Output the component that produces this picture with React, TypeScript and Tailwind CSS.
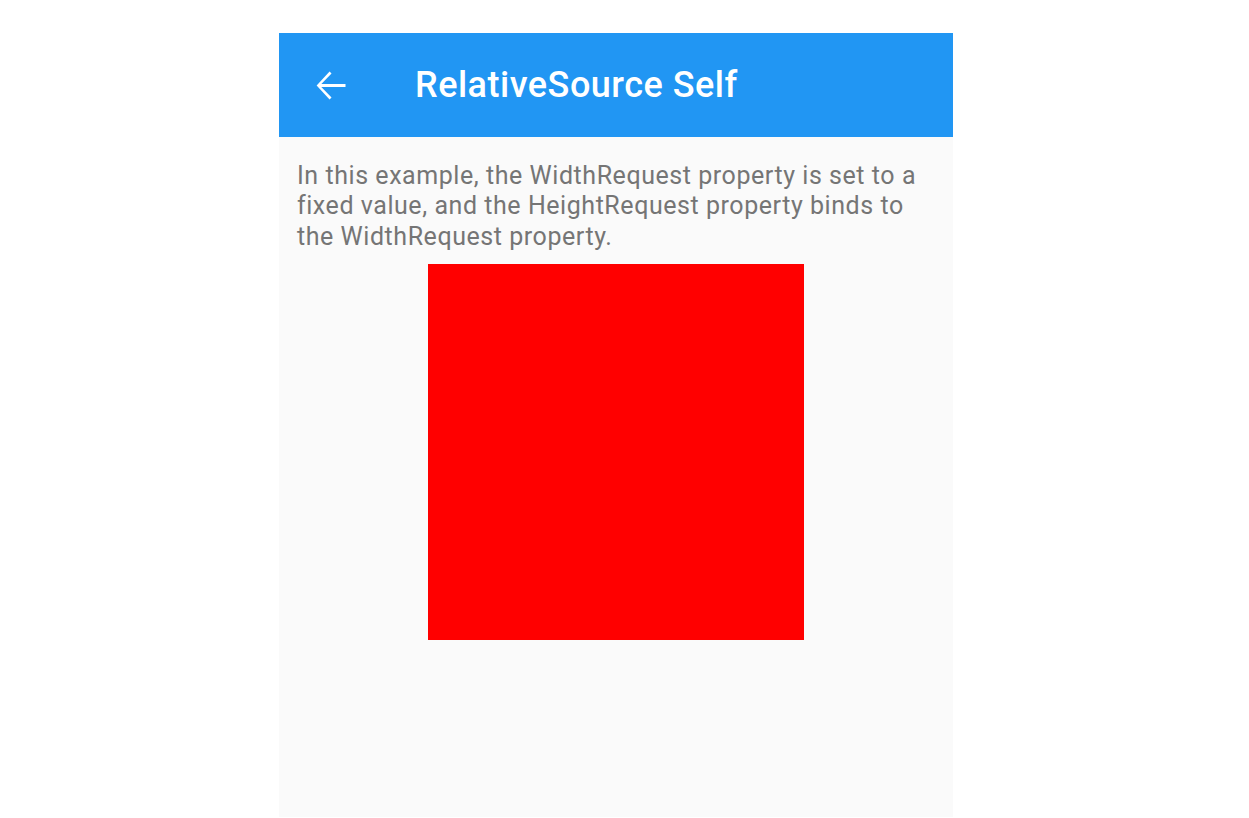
import React from "react";

export default function App() {
  return (
    <div className="w-[1249px] h-[818px] bg-white flex" style={{ fontFamily: "Roboto, 'Noto Sans', sans-serif" }}>
      <div className="w-[674px] ml-[279px] mt-[33px] h-[784px] flex flex-col bg-[#fafafa]">
        <div className="h-[104px] bg-[#2196f3] flex items-center shrink-0">
          <div className="ml-[29px] w-[45px] h-[45px] flex items-center justify-center">
            <svg viewBox="0 0 24 24" width="45" height="45" fill="white">
              <path d="M20 11.15H7.1l5.45-5.6-1.05-1.05L4.6 12l6.9 7.5 1.05-1.05-5.45-5.6H20z" />
            </svg>
          </div>
          <div className="ml-[62px] text-white text-[36px] font-medium leading-none tracking-[0.5px]">RelativeSource Self</div>
        </div>
        <div className="px-[18px] pt-[23.5px] text-[25px] leading-[30.5px] tracking-[0.55px] text-[#757575]">
          In this example, the WidthRequest property is set to a fixed value, and the HeightRequest property binds to the WidthRequest property.
        </div>
        <div className="flex justify-center mt-[12px]">
          <div className="w-[376px] h-[376px] bg-[#ff0000]" />
        </div>
      </div>
    </div>
  );
}
